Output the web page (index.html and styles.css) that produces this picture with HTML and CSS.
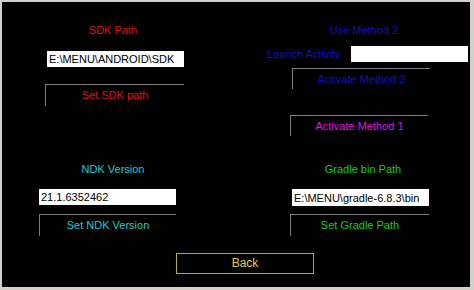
FILE: index.html
```html
<!DOCTYPE html>
<html>
<head>
<meta charset="utf-8">
<link rel="stylesheet" href="styles.css">
</head>
<body>
<div class="frame">
  <div class="cols">
    <div class="col">
      <div class="title red t-sdk">SDK Path</div>
      <input class="field f-sdk" type="text" value="E:\MENU\ANDROID\SDK">
      <div class="btn red b-sdk">Set SDK path</div>
      <div class="title cyan t-ndk">NDK Version</div>
      <input class="field f-ndk" type="text" value="21.1.6352462">
      <div class="btn cyan b-ndk">Set NDK Version</div>
    </div>
    <div class="col">
      <div class="title blue t-m2">Use Method 2</div>
      <div class="launch">
        <span class="blue lbl">Launch Activity</span>
        <input class="field f-act" type="text" value="">
      </div>
      <div class="btn blue b-m2">Activate Method 2</div>
      <div class="btn magenta b-m1">Activate Method 1</div>
      <div class="title green t-gr">Gradle bin Path</div>
      <input class="field f-gr" type="text" value="E:\MENU\gradle-6.8.3\bin">
      <div class="btn green b-gr">Set Gradle Path</div>
    </div>
  </div>
  <div class="back">Back</div>
</div>
</body>
</html>
```

FILE: styles.css
```css
html, body {
  margin: 0;
  padding: 0;
  background: #d4d0c8;
  width: 474px;
  height: 290px;
  overflow: hidden;
}
body {
  font-family: "Liberation Sans", Arial, sans-serif;
  font-size: 11px;
}
.frame {
  margin: 2px 4px 0 2px;
  width: 468px;
  height: 285px;
  background: #000;
  display: flex;
  flex-direction: column;
}
.cols {
  display: grid;
  grid-template-columns: 235px 233px;
}
.col {
  display: flex;
  flex-direction: column;
  align-items: flex-start;
}
.title {
  height: 14px;
  line-height: 14px;
  width: 150px;
  text-align: center;
}
.field {
  box-sizing: border-box;
  border: none;
  outline: none;
  background: #fff;
  color: #000;
  font-family: "Liberation Sans", Arial, sans-serif;
  font-size: 11px;
  height: 16px;
  padding: 0 2px;
  margin: 0;
}
.btn {
  box-sizing: border-box;
  border-top: 1px solid #7c7c7c;
  border-left: 1px solid #7c7c7c;
  height: 22px;
  line-height: 20px;
  text-align: center;
}
.red { color: #e01010; }
.cyan { color: #10d0d0; }
.blue { color: #1010c8; }
.magenta { color: #e010e0; }
.green { color: #10d010; }

/* left column */
.t-sdk { margin: 21px 0 0 36px; }
.f-sdk { margin: 14px 0 0 45px; width: 137px; }
.b-sdk { margin: 17px 0 0 43px; width: 139px; }
.t-ndk { margin: 56px 0 0 36px; }
.f-ndk { margin: 13px 0 0 37px; width: 137px; }
.b-ndk { margin: 9px 0 0 37px; width: 137px; }

/* right column */
.t-m2 { margin: 21px 0 0 52px; }
.launch {
  display: flex;
  align-items: center;
  margin: 9px 0 0 30px;
  height: 16px;
}
.lbl { width: 84px; line-height: 16px; }
.f-act { width: 117px; }
.b-m2 { margin: 6px 0 0 55px; width: 138px; height: 21px; }
.b-m1 { margin: 26px 0 0 53px; width: 138px; height: 21px; }
.t-gr { margin: 26px 0 0 51px; }
.f-gr { margin: 13px 0 0 55px; width: 137px; height: 17px; }
.b-gr { margin: 8px 0 0 53px; width: 139px; }

.back {
  box-sizing: border-box;
  margin: 17px 0 0 174px;
  width: 138px;
  height: 21px;
  line-height: 19px;
  border: 1px solid #b8a838;
  color: #e0d048;
  font-size: 12px;
  text-align: center;
}
```
